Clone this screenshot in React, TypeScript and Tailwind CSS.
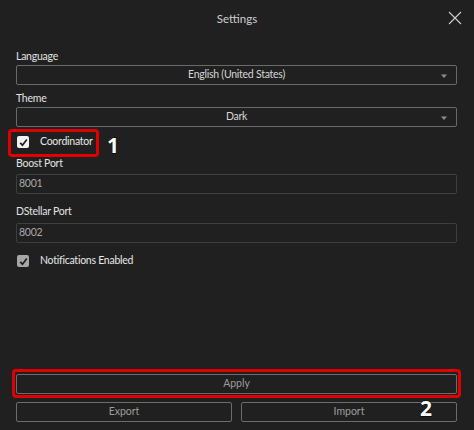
import { useState } from "react";

function Caret() {
  return (
    <svg width="8" height="5" viewBox="0 0 8 5" className="absolute right-[8px] top-[8px]">
      <path d="M1 0.5 L7 0.5 L4 4 Z" fill="#8e8e8e" />
    </svg>
  );
}

function SelectBox({ value }: { value: string }) {
  return (
    <div className="relative flex h-[20px] w-full items-center justify-center rounded-[2px] border border-[#6a6a6a] text-[#d6d6d6]">
      {value}
      <Caret />
    </div>
  );
}

function Check({ muted }: { muted?: boolean }) {
  return (
    <span
      className={
        "flex h-[12px] w-[12px] items-center justify-center rounded-[2px] " +
        (muted ? "bg-[#a6a6a6]" : "bg-[#f2f2f2]")
      }
    >
      <svg width="9" height="9" viewBox="0 0 9 9">
        <path d="M1.2 4.8 L3.5 7.2 L7.8 1.6" fill="none" stroke="#1c1c1c" strokeWidth="1.7" />
      </svg>
    </span>
  );
}

function PortInput({ value }: { value: string }) {
  return (
    <div className="flex h-[20px] w-full items-center rounded-[2px] border border-[#3e3e3e] pl-[2px] text-[#a9a9a9]">
      {value}
    </div>
  );
}

function Btn({ label }: { label: string }) {
  return (
    <button className="flex h-[20px] w-full items-center justify-center rounded-[2px] border border-[#6c6c6c] text-[10.5px] text-[#9c9c9c]">
      {label}
    </button>
  );
}

export default function App() {
  const [coordinator] = useState(true);

  return (
    <div
      className="relative flex h-[430px] w-[474px] flex-col bg-[#202020] text-[#e2e2e2]"
      style={{ fontFamily: 'Lato, "Noto Sans", sans-serif' }}
    >
      <div className="relative flex h-[38px] items-center justify-center text-[11.5px] text-[#cfcfcf]">
        Settings
        <svg width="14" height="14" viewBox="0 0 14 14" className="absolute right-[12px] top-[11px]">
          <path d="M1 1 L13 13 M13 1 L1 13" stroke="#cfcfcf" strokeWidth="1.1" />
        </svg>
      </div>

      <div className="flex flex-col pl-[16px] pr-[17px] text-[10.5px] tracking-[-0.25px]">
        <div className="mt-[10px] flex h-[17px] items-center">Language</div>
        <SelectBox value="English (United States)" />
        <div className="flex h-[22px] items-center pt-[5px]">Theme</div>
        <SelectBox value="Dark" />
        <div className="flex h-[30px] items-center gap-[11px] pl-[1px]">
          {coordinator && <Check />}
          <span className="text-[#e8e8e8]">Coordinator</span>
        </div>
        <div className="flex h-[17px] items-center pb-[3px]">Boost Port</div>
        <PortInput value="8001" />
        <div className="flex h-[29px] items-end pb-[3px]">DStellar Port</div>
        <PortInput value="8002" />
        <div className="flex h-[36px] items-center gap-[11px] pl-[1px]">
          <Check muted />
          <span className="text-[#e8e8e8]">Notifications Enabled</span>
        </div>
      </div>

      <div className="flex-1" />

      <div className="flex flex-col gap-[8px] pb-[8px] pl-[16px] pr-[17px]">
        <Btn label="Apply" />
        <div className="flex gap-[9px]">
          <Btn label="Export" />
          <Btn label="Import" />
        </div>
      </div>

      <div className="pointer-events-none absolute left-[8px] top-[129px] h-[28px] w-[91px] rounded-[4px] border-[3px] border-[#e00000]" />
      <div className="pointer-events-none absolute left-[12px] top-[369px] h-[29px] w-[449px] rounded-[4px] border-[3px] border-[#e00000]" />
      <span
        className="absolute left-[107px] top-[135px] text-[21px] font-bold leading-none text-white"
        style={{ fontFamily: '"Open Sans", sans-serif', WebkitTextStroke: "1px #000", paintOrder: "stroke fill" }}
      >
        1
      </span>
      <span
        className="absolute left-[420px] top-[398px] text-[21px] font-bold leading-none text-white"
        style={{ fontFamily: '"Open Sans", sans-serif', WebkitTextStroke: "1px #000", paintOrder: "stroke fill" }}
      >
        2
      </span>
    </div>
  );
}
